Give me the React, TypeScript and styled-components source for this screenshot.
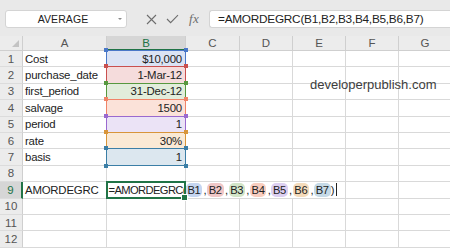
import styled, { createGlobalStyle } from "styled-components"

const GlobalStyle = createGlobalStyle`
  html, body {
    margin: 0;
    padding: 0;
    background: #fff;
  }
  body {
    font-family: "Liberation Sans", Arial, sans-serif;
  }
`

const GRID = "#d9d9d9"
const SELECT = "#217346"

const refs = [
  { border: "#4a78c8", fill: "#dbe3f4", chip: "#c6d6f1" },
  { border: "#c9504f", fill: "#f5dcdc", chip: "#f0c7c7" },
  { border: "#57983f", fill: "#e2eddb", chip: "#d2e5c8" },
  { border: "#f08468", fill: "#fbe2d9", chip: "#f8cdbf" },
  { border: "#9a69cf", fill: "#ebe3f6", chip: "#dccff1" },
  { border: "#d8953a", fill: "#fae9d5", chip: "#f4dbbb" },
  { border: "#3b7ea6", fill: "#dce7ef", chip: "#c6dae7" },
]

const data = [
  { label: "Cost", value: "$10,000" },
  { label: "purchase_date", value: "1-Mar-12" },
  { label: "first_period", value: "31-Dec-12" },
  { label: "salvage", value: "1500" },
  { label: "period", value: "1" },
  { label: "rate", value: "30%" },
  { label: "basis", value: "1" },
]

const columns = ["A", "B", "C", "D", "E", "F", "G"]

const Window = styled.div`
  position: relative;
  width: 450px;
  height: 248px;
  overflow: hidden;
  background: #e9e9e9;
`

const FormulaBar = styled.div`
  display: flex;
  align-items: center;
  height: 18px;
  padding: 10px 0 8px 5px;
`

const NameBox = styled.div`
  position: relative;
  flex: none;
  width: 122px;
  height: 18px;
  box-sizing: border-box;
  background: #fff;
  border: 1px solid #d4d4d4;
  border-radius: 3px;
  font-size: 10.5px;
  color: #222;
  display: flex;
  align-items: center;
  justify-content: center;
  padding-right: 6px;
  letter-spacing: 0.1px;
`

const Caret = styled.span`
  position: absolute;
  right: 4px;
  top: 7px;
  width: 0;
  height: 0;
  border-left: 2px solid transparent;
  border-right: 2px solid transparent;
  border-top: 2px solid #8a8a8a;
`

const Tools = styled.div`
  flex: none;
  display: flex;
  align-items: center;
  gap: 9px;
  margin-left: 19px;
  width: 63px;
`

const ToolIcon = styled.svg`
  display: block;
  flex: none;
`

const Fx = styled.span`
  font-family: "Liberation Serif", "Times New Roman", serif;
  font-style: italic;
  font-size: 13px;
  color: #6d6d6d;
  letter-spacing: 0.5px;
  margin-left: 1px;
`

const FormulaInput = styled.div`
  flex: 1;
  min-width: 0;
  overflow: hidden;
  height: 18px;
  box-sizing: border-box;
  background: #fff;
  border: 1px solid #d4d4d4;
  border-right: 0;
  border-radius: 3px 0 0 3px;
  font-size: 11.8px;
  letter-spacing: -0.25px;
  color: #222;
  padding-left: 8px;
  display: flex;
  align-items: center;
  white-space: nowrap;
`

const Sheet = styled.div`
  display: grid;
  grid-template-columns: 23px 84px 79px 54px 53px 53px 53px 53px 53px;
  grid-template-rows: 15px;
  grid-auto-rows: 16.4px;
  background: #fff;
`

const Corner = styled.div`
  position: relative;
  background: #ececec;
  border-right: 1px solid #cfcfcf;
  border-bottom: 1px solid #cfcfcf;

  &::after {
    content: "";
    position: absolute;
    right: 3px;
    bottom: 3px;
    width: 0;
    height: 0;
    border-left: 7px solid transparent;
    border-bottom: 7px solid #c3c3c3;
  }
`

const ColHead = styled.div<{ $active?: boolean }>`
  background: ${(p) => (p.$active ? "#d6d6d6" : "#ececec")};
  border-right: 1px solid #cfcfcf;
  border-bottom: ${(p) => (p.$active ? `2px solid ${SELECT}` : "1px solid #cfcfcf")};
  color: ${(p) => (p.$active ? SELECT : "#555")};
  font-size: 11.5px;
  display: flex;
  align-items: center;
  justify-content: center;
  box-sizing: border-box;
`

const RowHead = styled.div<{ $active?: boolean }>`
  background: ${(p) => (p.$active ? "#d6d6d6" : "#ececec")};
  border-right: ${(p) => (p.$active ? `2px solid ${SELECT}` : "1px solid #cfcfcf")};
  border-bottom: 1px solid #dcdcdc;
  color: ${(p) => (p.$active ? SELECT : "#555")};
  font-size: 11.5px;
  display: flex;
  align-items: center;
  justify-content: center;
  box-sizing: border-box;
`

const Cell = styled.div<{ $align?: "left" | "right"; $fill?: string }>`
  position: relative;
  box-sizing: border-box;
  border-right: 1px solid ${GRID};
  border-bottom: 1px solid ${GRID};
  background: ${(p) => p.$fill || "#fff"};
  font-size: 11.4px;
  letter-spacing: -0.2px;
  color: #222;
  padding: 0 3px 0 2px;
  display: flex;
  align-items: center;
  justify-content: ${(p) => (p.$align === "right" ? "flex-end" : "flex-start")};
  white-space: nowrap;
`

const RefFrame = styled.div<{ $color: string; $last?: boolean }>`
  position: absolute;
  left: -1px;
  right: -1px;
  top: -1px;
  bottom: ${(p) => (p.$last ? "-1px" : "0")};
  border: 1.5px solid ${(p) => p.$color};
  border-bottom-width: ${(p) => (p.$last ? "1.5px" : "0")};
  pointer-events: none;
  z-index: 2;
`

const Handle = styled.span<{ $color: string; $x: "left" | "right"; $y: "top" | "bottom" }>`
  position: absolute;
  width: 4px;
  height: 4px;
  background: ${(p) => p.$color};
  ${(p) => p.$x}: -3px;
  ${(p) => p.$y}: -3px;
`

const EditCell = styled(Cell)`
  padding: 0;
  z-index: 3;
  overflow: visible;
`

const EditFrame = styled.div`
  position: absolute;
  left: -1px;
  top: -1px;
  right: -1px;
  bottom: -1px;
  border: 2px solid ${SELECT};
  box-sizing: border-box;
  pointer-events: none;

  &::after {
    content: "";
    position: absolute;
    right: -4px;
    bottom: -4px;
    width: 5px;
    height: 5px;
    background: ${SELECT};
    border: 1px solid #fff;
  }
`

const EditText = styled.div`
  position: absolute;
  left: 1.5px;
  top: 0;
  bottom: 0;
  display: flex;
  align-items: center;
  background: #fff;
  font-size: 11.2px;
  letter-spacing: -0.62px;
  color: #222;
  white-space: nowrap;
  padding-right: 2px;
`

const Chip = styled.span<{ $fill: string }>`
  display: inline-block;
  background: ${(p) => p.$fill};
  border-radius: 5px;
  padding: 1px 2px 1px 1.5px;
  line-height: 12px;
  letter-spacing: -0.4px;
`

const Comma = styled.span`
  display: inline-block;
  width: 5px;
  text-align: center;
`

const Cursor = styled.span`
  display: inline-block;
  width: 1px;
  height: 13px;
  background: #222;
  margin-left: 2px;
`

const Watermark = styled.div`
  position: absolute;
  left: 310px;
  top: 77px;
  font-size: 13px;
  color: #3d3d3d;
  pointer-events: none;
`

function XIcon() {
  return (
    <ToolIcon width="11" height="11" viewBox="0 0 11 11">
      <path d="M1 1 L10 10 M10 1 L1 10" stroke="#6d6d6d" strokeWidth="1.1" fill="none" />
    </ToolIcon>
  )
}

function CheckIcon() {
  return (
    <ToolIcon width="13" height="10" viewBox="0 0 13 10">
      <path d="M1 5 L4.6 8.6 L12 1.2" stroke="#6d6d6d" strokeWidth="1.1" fill="none" />
    </ToolIcon>
  )
}

function RefCell({ value, index }: { value: string; index: number }) {
  const r = refs[index]
  const last = index === refs.length - 1
  return (
    <Cell $align="right" $fill={r.fill}>
      {value}
      <RefFrame $color={r.border} $last={last}>
        <Handle $color={r.border} $x="left" $y="top" />
        <Handle $color={r.border} $x="right" $y="top" />
        {last && <Handle $color={r.border} $x="left" $y="bottom" />}
        {last && <Handle $color={r.border} $x="right" $y="bottom" />}
      </RefFrame>
    </Cell>
  )
}

function EmptyCells({ count }: { count: number }) {
  return (
    <>
      {Array.from({ length: count }).map((_, i) => (
        <Cell key={i} />
      ))}
    </>
  )
}

function Row({ n, children }: { n: number; children: React.ReactNode }) {
  return (
    <>
      <RowHead>{n}</RowHead>
      {children}
      <EmptyCells count={6} />
    </>
  )
}

export default function App() {
  return (
    <>
      <GlobalStyle />
      <Window>
        <FormulaBar>
          <NameBox>
            AVERAGE
            <Caret />
          </NameBox>
          <Tools>
            <XIcon />
            <CheckIcon />
            <Fx>fx</Fx>
          </Tools>
          <FormulaInput>=AMORDEGRC(B1,B2,B3,B4,B5,B6,B7)</FormulaInput>
        </FormulaBar>

        <Sheet>
          <Corner />
          {columns.map((c) => (
            <ColHead key={c} $active={c === "B"}>
              {c}
            </ColHead>
          ))}
          <ColHead />

          {data.map((row, i) => (
            <Row key={row.label} n={i + 1}>
              <Cell>{row.label}</Cell>
              <RefCell value={row.value} index={i} />
            </Row>
          ))}

          <Row n={8}>
            <Cell />
            <Cell />
          </Row>

          <RowHead $active>9</RowHead>
          <Cell>AMORDEGRC</Cell>
          <EditCell>
            <EditText>
              =AMORDEGRC(
              {refs.map((r, i) => (
                <span key={i}>
                  <Chip $fill={r.chip}>B{i + 1}</Chip>
                  {i < refs.length - 1 && <Comma>,</Comma>}
                </span>
              ))}
              )
              <Cursor />
            </EditText>
            <EditFrame />
          </EditCell>
          <EmptyCells count={6} />

          {[10, 11, 12].map((n) => (
            <Row key={n} n={n}>
              <Cell />
              <Cell />
            </Row>
          ))}
        </Sheet>

        <Watermark>developerpublish.com</Watermark>
      </Window>
    </>
  )
}
